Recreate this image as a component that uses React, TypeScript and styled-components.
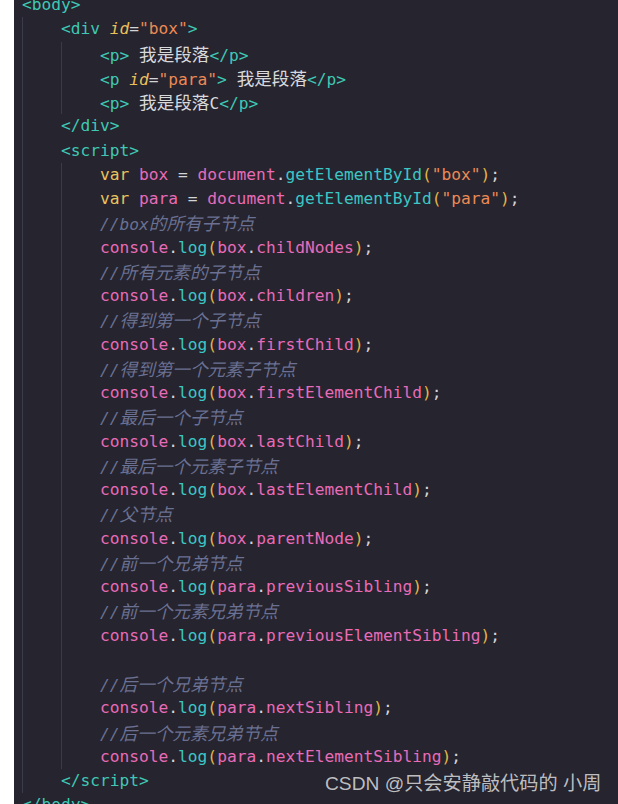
import React from "react";
import styled, { createGlobalStyle } from "styled-components";

const GlobalStyle = createGlobalStyle`
  html, body { margin: 0; padding: 0; background: #ffffff; }
  body { width: 618px; height: 804px; overflow: hidden; }
`;

type Kind = "t" | "a" | "s" | "x" | "k" | "v" | "m" | "p" | "c" | "o";

const COLORS: Record<Kind, string> = {
  t: "#3fc8b4",
  a: "#ebc05a",
  s: "#ec8a55",
  x: "#d9d9dc",
  k: "#e8c45e",
  v: "#e86bb8",
  m: "#3cc6c4",
  p: "#e4b444",
  c: "#6b7192",
  o: "#d4d4d8",
};

const Page = styled.div`
  position: relative;
  display: flex;
  width: 618px;
  height: 804px;
  overflow: hidden;
  background: #ffffff;
`;

const Gutter = styled.div`
  flex: none;
  width: 14px;
  background: #ffffff;
`;

const Editor = styled.div`
  flex: 1;
  background: #25242f;
  padding-left: 8px;
  overflow: hidden;
  font-family: "DejaVu Sans Mono", monospace;
  font-size: 16.22px;
  color: #d4d4d8;
`;

const Code = styled.div`
  display: flex;
  flex-direction: column;
  margin-top: -7px;
`;

const Line = styled.div`
  height: 24.25px;
  line-height: 24.25px;
  white-space: pre;
`;

const Guide = styled.span`
  display: inline-block;
  box-sizing: border-box;
  width: 4ch;
  height: 24.25px;
  vertical-align: top;
  border-left: 1px solid #3b3a4a;
`;

const Token = styled.span<{ $k: Kind }>`
  color: ${(p) => COLORS[p.$k]};
  font-style: ${(p) => (p.$k === "a" || p.$k === "c" ? "italic" : "normal")};
`;

const Cjk = styled.span`
  font-family: "Noto Sans CJK SC", sans-serif;
  font-size: 17.6px;
`;

const Watermark = styled.div`
  position: absolute;
  left: 325px;
  top: 771px;
  font-family: "Liberation Sans", "Noto Sans CJK SC", sans-serif;
  font-size: 19.2px;
  line-height: 26px;
  color: rgba(205, 205, 208, 0.92);
  white-space: pre;
`;

type Tok = [Kind, string];
type Row = { indent: number; tokens: Tok[] };

const cjkRe = /([\u3000-\u9fff\uff00-\uffef]+)/;

function renderText(text: string) {
  return text.split(cjkRe).map((part, i) =>
    part === "" ? null : cjkRe.test(part) ? <Cjk key={i}>{part}</Cjk> : <React.Fragment key={i}>{part}</React.Fragment>
  );
}

const log = (obj: string, prop: string): Tok[] => [
  ["v", "console"],
  ["o", "."],
  ["m", "log"],
  ["p", "("],
  ["v", obj],
  ["o", "."],
  ["v", prop],
  ["p", ")"],
  ["o", ";"],
];

const getById = (name: string): Tok[] => [
  ["k", "var "],
  ["v", name],
  ["o", " = "],
  ["v", "document"],
  ["o", "."],
  ["m", "getElementById"],
  ["p", "("],
  ["s", `"${name}"`],
  ["p", ")"],
  ["o", ";"],
];

const rows: Row[] = [
  { indent: 0, tokens: [["t", "<body>"]] },
  { indent: 1, tokens: [["t", "<div "], ["a", "id"], ["o", "="], ["s", '"box"'], ["t", ">"]] },
  { indent: 2, tokens: [["t", "<p>"], ["x", " 我是段落"], ["t", "</p>"]] },
  { indent: 2, tokens: [["t", "<p "], ["a", "id"], ["o", "="], ["s", '"para"'], ["t", ">"], ["x", " 我是段落"], ["t", "</p>"]] },
  { indent: 2, tokens: [["t", "<p>"], ["x", " 我是段落C"], ["t", "</p>"]] },
  { indent: 1, tokens: [["t", "</div>"]] },
  { indent: 1, tokens: [["t", "<script>"]] },
  { indent: 2, tokens: getById("box") },
  { indent: 2, tokens: getById("para") },
  { indent: 2, tokens: [["c", "//box的所有子节点"]] },
  { indent: 2, tokens: log("box", "childNodes") },
  { indent: 2, tokens: [["c", "//所有元素的子节点"]] },
  { indent: 2, tokens: log("box", "children") },
  { indent: 2, tokens: [["c", "//得到第一个子节点"]] },
  { indent: 2, tokens: log("box", "firstChild") },
  { indent: 2, tokens: [["c", "//得到第一个元素子节点"]] },
  { indent: 2, tokens: log("box", "firstElementChild") },
  { indent: 2, tokens: [["c", "//最后一个子节点"]] },
  { indent: 2, tokens: log("box", "lastChild") },
  { indent: 2, tokens: [["c", "//最后一个元素子节点"]] },
  { indent: 2, tokens: log("box", "lastElementChild") },
  { indent: 2, tokens: [["c", "//父节点"]] },
  { indent: 2, tokens: log("box", "parentNode") },
  { indent: 2, tokens: [["c", "//前一个兄弟节点"]] },
  { indent: 2, tokens: log("para", "previousSibling") },
  { indent: 2, tokens: [["c", "//前一个元素兄弟节点"]] },
  { indent: 2, tokens: log("para", "previousElementSibling") },
  { indent: 2, tokens: [] },
  { indent: 2, tokens: [["c", "//后一个兄弟节点"]] },
  { indent: 2, tokens: log("para", "nextSibling") },
  { indent: 2, tokens: [["c", "//后一个元素兄弟节点"]] },
  { indent: 2, tokens: log("para", "nextElementSibling") },
  { indent: 1, tokens: [["t", "</script>"]] },
  { indent: 0, tokens: [["t", "</body>"]] },
];

export default function App() {
  return (
    <>
      <GlobalStyle />
      <Page>
        <Gutter />
        <Editor>
          <Code>
            {rows.map((row, i) => (
              <Line key={i}>
                {Array.from({ length: row.indent }).map((_, g) => (
                  <Guide key={g} />
                ))}
                {row.tokens.map(([k, text], j) => (
                  <Token key={j} $k={k}>
                    {renderText(text)}
                  </Token>
                ))}
              </Line>
            ))}
          </Code>
        </Editor>
        <Watermark>CSDN @只会安静敲代码的 小周</Watermark>
      </Page>
    </>
  );
}
